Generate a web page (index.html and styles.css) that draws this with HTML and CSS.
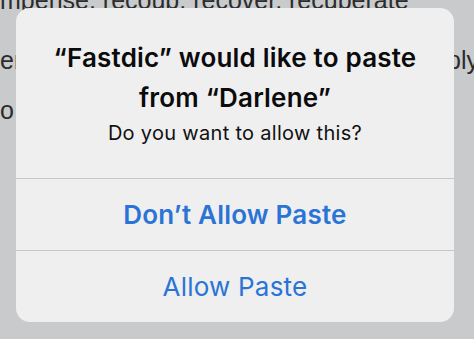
FILE: index.html
```html
<!DOCTYPE html>
<html lang="en">
<head>
    <meta charset="UTF-8">
    <meta name="viewport" content="width=device-width, initial-scale=1.0">
    <title>Allow Paste</title>
    <link rel="stylesheet" href="styles.css">
</head>
<body>
    <!-- Dimmed page behind the alert -->
    <div class="page">
        <div class="line line-first">mpense, recoup, recover, recuperate</div>
        <div class="line line-split">
            <span>er</span>
            <span class="line-end">ply</span>
        </div>
        <div class="line">o</div>
    </div>

    <!-- Alert -->
    <div class="alert">
        <div class="alert-body">
            <h2 class="alert-title">“Fastdic” would like to paste from “Darlene”</h2>
            <p class="alert-message">Do you want to allow this?</p>
        </div>
        <button class="alert-btn alert-btn-strong">Don’t Allow Paste</button>
        <button class="alert-btn">Allow Paste</button>
    </div>
</body>
</html>
```

FILE: styles.css
```css
* {
    margin: 0;
    padding: 0;
    box-sizing: border-box;
}

body {
    width: 474px;
    height: 339px;
    background-color: #c9cacb;
    font-family: Inter, "Liberation Sans", Arial, sans-serif;
    overflow: hidden;
    position: relative;
}

.page {
    font-family: "Liberation Sans", Arial, sans-serif;
    font-size: 25px;
    color: #2b2c2e;
    margin-top: -30px;
}

.line {
    height: 50px;
    line-height: 50px;
    white-space: nowrap;
}

.line-first {
    height: 65px;
    line-height: 60px;
}

.line-split {
    display: flex;
    justify-content: space-between;
}

.line-end {
    margin-right: -5px;
}

.alert {
    position: absolute;
    top: 8px;
    left: 16px;
    width: 438px;
    height: 314px;
    background-color: #efeff0;
    border-radius: 14px;
    display: flex;
    flex-direction: column;
    overflow: hidden;
}

.alert-body {
    padding: 30px 28px 0;
    height: 170px;
    text-align: center;
}

.alert-title {
    font-size: 26px;
    line-height: 40px;
    font-weight: 600;
    letter-spacing: 0.2px;
    color: #0b0b0c;
}

.alert-message {
    margin-top: 3px;
    font-size: 20px;
    line-height: 24px;
    letter-spacing: 0.3px;
    color: #111;
}

.alert-btn {
    height: 72px;
    border: none;
    border-top: 1px solid #c6c6c9;
    background: none;
    font-family: inherit;
    font-size: 26px;
    letter-spacing: 0.2px;
    color: #2a74d6;
    display: flex;
    align-items: center;
    justify-content: center;
}

.alert-btn-strong {
    font-weight: 600;
}
```
